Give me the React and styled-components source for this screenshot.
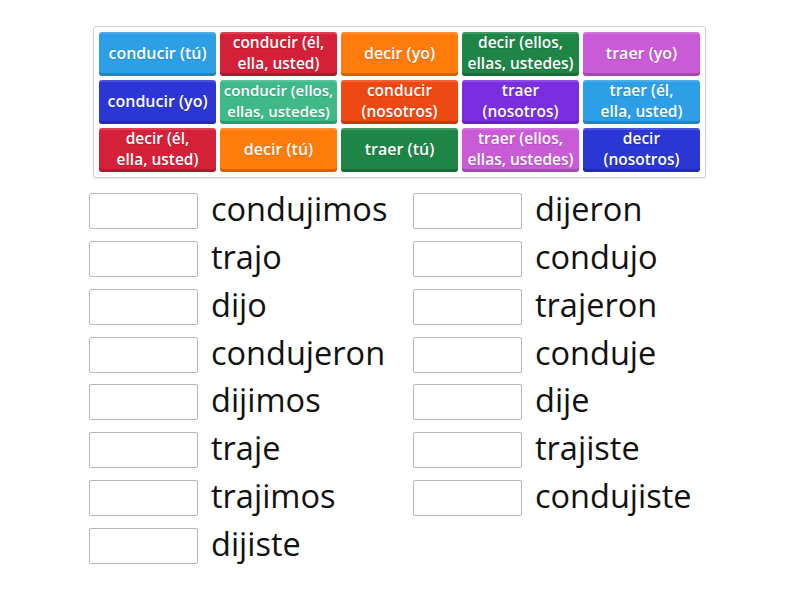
import { Fragment } from "react";
import styled, { createGlobalStyle } from "styled-components";

const tiles = [
  [["conducir (tú)"], "#2d9fe6"],
  [["conducir (él,", "ella, usted)"], "#d42038"],
  [["decir (yo)"], "#ff7b0c"],
  [["decir (ellos,", "ellas, ustedes)"], "#1f8547"],
  [["traer (yo)"], "#c95bd6"],
  [["conducir (yo)"], "#2b36d4"],
  [["conducir (ellos,", "ellas, ustedes)"], "#3fb98a", 15],
  [["conducir", "(nosotros)"], "#ee4813"],
  [["traer", "(nosotros)"], "#7b2ee0"],
  [["traer (él,", "ella, usted)"], "#2d9fe6"],
  [["decir (él,", "ella, usted)"], "#d42038"],
  [["decir (tú)"], "#ff7b0c"],
  [["traer (tú)"], "#1f8547"],
  [["traer (ellos,", "ellas, ustedes)"], "#c95bd6"],
  [["decir", "(nosotros)"], "#2b36d4"],
];

const left = ["condujimos", "trajo", "dijo", "condujeron", "dijimos", "traje", "trajimos", "dijiste"];
const right = ["dijeron", "condujo", "trajeron", "conduje", "dije", "trajiste", "condujiste"];

const App = () => {
  return (
    <Page>
      <GlobalStyle />
      <TilePanel>
        {tiles.map(([lines, color, size]) => (
          <Tile key={lines.join(" ")} $bg={color}>
            <TileText $size={size || (lines.length > 1 ? 15.5 : 16)}>
              {lines.map((line, i) => (
                <Fragment key={line}>
                  {i > 0 && <br />}
                  {line}
                </Fragment>
              ))}
            </TileText>
          </Tile>
        ))}
      </TilePanel>
      <Answers>
        <Column>
          {left.map((word) => (
            <Row key={word}>
              <Slot />
              <Word>{word}</Word>
            </Row>
          ))}
        </Column>
        <Column>
          {right.map((word) => (
            <Row key={word}>
              <Slot />
              <Word>{word}</Word>
            </Row>
          ))}
        </Column>
      </Answers>
    </Page>
  );
};

export default App;

const GlobalStyle = createGlobalStyle`
  body {
    margin: 0;
    background: #ffffff;
    font-family: "Open Sans", "Noto Sans", sans-serif;
  }
`;

const Page = styled.div`
  width: 800px;
  height: 600px;
  padding: 26px 0 0 93px;
  box-sizing: border-box;
`;

const TilePanel = styled.div`
  display: grid;
  grid-template-columns: repeat(5, 117px);
  grid-auto-rows: 44px;
  gap: 4px 4px;
  width: fit-content;
  padding: 5px;
  border: 1px solid #cfcfcf;
  border-radius: 3px;
  background: #fff;
  box-shadow: 0 1px 2px rgba(0, 0, 0, 0.08);
`;

const Tile = styled.div`
  display: flex;
  align-items: center;
  justify-content: center;
  border-radius: 3px;
  background: ${(p) => p.$bg};
  padding-bottom: 2px;
  box-sizing: border-box;
  box-shadow: inset 0 2px 0 rgba(255, 255, 255, 0.15),
    inset 0 -3px 0 rgba(0, 0, 0, 0.18);
`;

const TileText = styled.div`
  text-align: center;
  color: #fff;
  font-size: ${(p) => p.$size}px;
  font-weight: 600;
  line-height: 21px;
  white-space: nowrap;
  text-shadow: 0 1px 1px rgba(0, 0, 0, 0.15);
`;

const Answers = styled.div`
  display: flex;
  margin: 15px 0 0 -4px;
`;

const Column = styled.div`
  display: flex;
  flex-direction: column;
  gap: 11.86px;
  width: 324px;
`;

const Row = styled.div`
  display: flex;
  align-items: center;
  height: 36px;
`;

const Slot = styled.div`
  width: 109px;
  height: 36px;
  box-sizing: border-box;
  border: 1px solid #b8b8b8;
  border-radius: 2px;
  background: #fff;
  flex-shrink: 0;
`;

const Word = styled.div`
  margin: -4px 0 0 13px;
  font-size: 32.5px;
  color: #111;
  line-height: 36px;
  white-space: nowrap;
`;
